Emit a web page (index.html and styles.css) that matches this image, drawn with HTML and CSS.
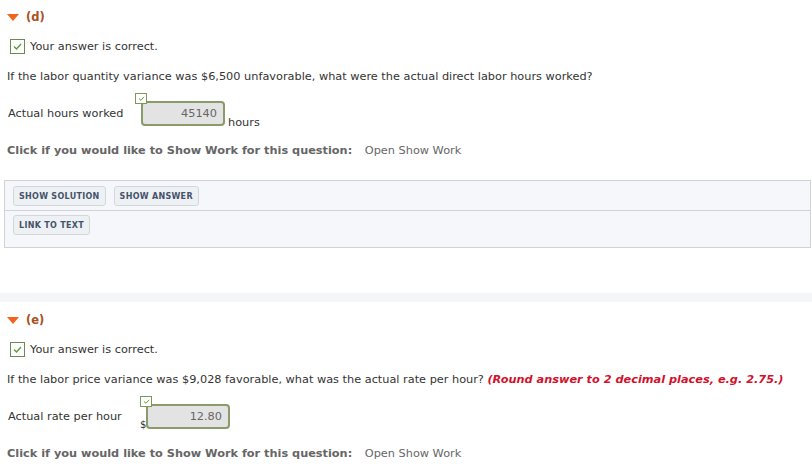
FILE: index.html
```html
<!doctype html>
<html lang="en">
  <head>
    <meta charset="UTF-8" />
    <meta name="viewport" content="width=device-width, initial-scale=1.0" />
    <title>Labor Variance Questions</title>
    <link rel="stylesheet" href="styles.css">
  </head>
  <body>
    <div class="part">
      <div class="part-head">
        <span class="arrow"></span>
        <span class="part-label">(d)</span>
      </div>

      <div class="result">
        <span class="check-box">
          <svg width="11" height="11" viewBox="0 0 11 11"><path d="M2 5.5 L4.5 8 L9 3" fill="none" stroke="#5a9a3c" stroke-width="1.4"/></svg>
        </span>
        Your answer is correct.
      </div>

      <p class="question">If the labor quantity variance was $6,500 unfavorable, what were the actual direct labor hours worked?</p>

      <div class="answer-row">
        <span class="answer-label">Actual hours worked</span>
        <span class="field">
          <span class="mini-check">
            <svg width="7" height="7" viewBox="0 0 7 7"><path d="M1 3.5 L3 5.3 L6 1.8" fill="none" stroke="#6a9a48" stroke-width="1"/></svg>
          </span>
          <span class="field-box">45140</span>
        </span>
        <span class="unit">hours</span>
      </div>

      <div class="show-work">
        <strong>Click if you would like to Show Work for this question:</strong>
        <span class="show-link">Open Show Work</span>
      </div>

      <div class="resources">
        <div class="res-row">
          <button class="res-btn">Show Solution</button>
          <button class="res-btn">Show Answer</button>
        </div>
        <div class="res-row">
          <button class="res-btn">Link to Text</button>
        </div>
      </div>
    </div>

    <div class="divider"></div>

    <div class="part">
      <div class="part-head">
        <span class="arrow"></span>
        <span class="part-label">(e)</span>
      </div>

      <div class="result">
        <span class="check-box">
          <svg width="11" height="11" viewBox="0 0 11 11"><path d="M2 5.5 L4.5 8 L9 3" fill="none" stroke="#5a9a3c" stroke-width="1.4"/></svg>
        </span>
        Your answer is correct.
      </div>

      <p class="question">If the labor price variance was $9,028 favorable, what was the actual rate per hour? <em class="hint">(Round answer to 2 decimal places, e.g. 2.75.)</em></p>

      <div class="answer-row">
        <span class="answer-label wide">Actual rate per hour</span>
        <span class="currency">$</span>
        <span class="field">
          <span class="mini-check">
            <svg width="7" height="7" viewBox="0 0 7 7"><path d="M1 3.5 L3 5.3 L6 1.8" fill="none" stroke="#6a9a48" stroke-width="1"/></svg>
          </span>
          <span class="field-box">12.80</span>
        </span>
      </div>

      <div class="show-work">
        <strong>Click if you would like to Show Work for this question:</strong>
        <span class="show-link">Open Show Work</span>
      </div>
    </div>
  </body>
</html>
```

FILE: styles.css
```css
body {
  margin: 0;
  font-family: "DejaVu Sans", Verdana, sans-serif;
  font-size: 11.3px;
  color: #333;
  background: #fff;
}
.part {
  padding: 11px 0 0 0;
}
.part-head {
  display: flex;
  align-items: center;
  height: 12px;
  padding-left: 7px;
}
.arrow {
  width: 0;
  height: 0;
  border-left: 6px solid transparent;
  border-right: 6px solid transparent;
  border-top: 7px solid #f0641e;
  margin-right: 7px;
}
.part-label {
  font-weight: bold;
  font-size: 11.5px;
  color: #a8501e;
}
.result {
  display: flex;
  align-items: center;
  margin: 16px 0 0 10px;
  height: 15px;
}
.check-box {
  width: 13px;
  height: 13px;
  border: 1px solid #6b8a52;
  display: flex;
  align-items: center;
  justify-content: center;
  margin-right: 5px;
  background: #fff;
}
.question {
  margin: 16px 0 0 7px;
  line-height: 14px;
}
.hint {
  color: #d0122c;
  font-weight: bold;
}
.answer-row {
  display: flex;
  align-items: flex-start;
  margin: 9px 0 0 8px;
  height: 35px;
}
.answer-label {
  width: 133px;
  margin-top: 14px;
}
.answer-label.wide {
  width: 132px;
}
.field {
  position: relative;
  padding-top: 8px;
}
.mini-check {
  position: absolute;
  top: 0;
  left: -6px;
  width: 10px;
  height: 9px;
  border: 1px solid #7a9a5c;
  background: #fff;
  display: flex;
  align-items: center;
  justify-content: center;
}
.field-box {
  display: block;
  width: 74px;
  height: 21px;
  line-height: 21px;
  padding-right: 6px;
  text-align: right;
  border: 2px solid #8a9a6a;
  border-radius: 4px;
  background: #e3e3e3;
  color: #666;
  box-sizing: content-box;
}
.unit {
  margin: 23px 0 0 3px;
}
.currency {
  margin: 23px 0 0 0;
  width: 6px;
  font-size: 10px;
}
.show-work {
  margin: 16px 0 0 7px;
  color: #666;
}
.show-work strong {
  margin-right: 9px;
}
.show-link {
  color: #666;
}
.resources {
  margin: 23px 1px 0 4px;
  border: 1px solid #cfd3d8;
  background: #f5f7fa;
}
.res-row {
  display: flex;
  gap: 8px;
  padding: 5px 8px 4px 8px;
}
.res-row + .res-row {
  border-top: 1px solid #cfd3d8;
  padding-top: 4px;
  padding-bottom: 12px;
}
.res-btn {
  height: 20px;
  font-family: inherit;
  font-size: 8px;
  font-weight: bold;
  text-transform: uppercase;
  letter-spacing: 0.3px;
  color: #45536a;
  background: #eef1f4;
  border: 1px solid #d3d7dc;
  border-radius: 3px;
  padding: 0 5px;
  cursor: pointer;
}
.divider {
  margin: 45px 0 1px 0;
  height: 9px;
  background: #f5f6f8;
}
```
